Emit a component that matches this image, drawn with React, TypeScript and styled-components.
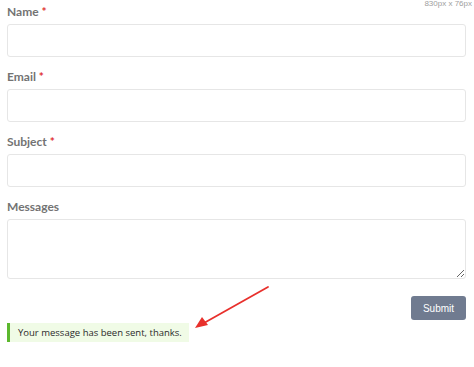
import React from 'react';
import styled, { createGlobalStyle } from 'styled-components';

const GlobalStyle = createGlobalStyle`
  html, body {
    margin: 0;
    padding: 0;
    background: #ffffff;
  }
  body {
    font-family: 'Open Sans', 'Liberation Sans', sans-serif;
  }
`;

const Page = styled.div`
  position: relative;
  width: 474px;
  height: 367px;
  overflow: hidden;
  box-sizing: border-box;
  padding: 3px 8px 0 7px;
`;

const SizeHint = styled.div`
  position: absolute;
  top: -1px;
  right: 2px;
  font-family: 'Liberation Sans', sans-serif;
  font-size: 8px;
  line-height: 9px;
  color: #a0a0a0;
`;

const Form = styled.form`
  display: flex;
  flex-direction: column;
`;

const Field = styled.div<{ $last?: boolean }>`
  display: flex;
  flex-direction: column;
  margin-bottom: ${(p) => (p.$last ? '0' : '11px')};
`;

const Label = styled.label`
  font-family: 'Lato', 'Open Sans', sans-serif;
  font-weight: 700;
  font-size: 12px;
  line-height: 18px;
  color: #737373;
  margin-bottom: 3px;
`;

const Required = styled.span`
  color: #e03030;
`;

const Input = styled.input`
  box-sizing: border-box;
  width: 100%;
  height: 33px;
  border: 1px solid #e6e6e6;
  border-radius: 3px;
  background: #fff;
  outline: none;
`;

const TextArea = styled.textarea`
  box-sizing: border-box;
  width: 100%;
  height: 60px;
  border: 1px solid #e6e6e6;
  border-radius: 3px;
  background: #fff;
  outline: none;
  resize: vertical;
  display: block;
`;

const Actions = styled.div`
  display: flex;
  justify-content: flex-end;
  margin-top: 17px;
`;

const SubmitButton = styled.button`
  width: 55px;
  height: 24px;
  border: none;
  border-radius: 3px;
  background: #707b90;
  color: #fff;
  font-family: 'Liberation Sans', sans-serif;
  font-size: 10px;
  cursor: pointer;
`;

const Notice = styled.div`
  align-self: flex-start;
  margin-top: 3px;
  height: 19px;
  box-sizing: border-box;
  display: flex;
  align-items: center;
  padding: 0 7px 0 8px;
  border-left: 3px solid #5cb82e;
  background: #f0fbe6;
  font-family: 'Open Sans', 'Liberation Sans', sans-serif;
  font-size: 9.5px;
  white-space: nowrap;
  color: #2a2a2a;
`;

const Arrow = styled.svg`
  position: absolute;
  left: 0;
  top: 0;
  pointer-events: none;
`;

const App = () => {
  return (
    <>
      <GlobalStyle />
      <Page>
        <SizeHint>830px x 76px</SizeHint>
        <Form onSubmit={(e) => e.preventDefault()}>
          <Field>
            <Label>
              Name <Required>*</Required>
            </Label>
            <Input type="text" />
          </Field>
          <Field>
            <Label>
              Email <Required>*</Required>
            </Label>
            <Input type="email" />
          </Field>
          <Field>
            <Label>
              Subject <Required>*</Required>
            </Label>
            <Input type="text" />
          </Field>
          <Field $last>
            <Label>Messages</Label>
            <TextArea />
          </Field>
          <Actions>
            <SubmitButton type="submit">Submit</SubmitButton>
          </Actions>
          <Notice>Your message has been sent, thanks.</Notice>
        </Form>
        <Arrow width="474" height="367" viewBox="0 0 474 367">
          <path d="M268 287 L204 323" stroke="#e8302c" strokeWidth="1.8" strokeLinecap="round" fill="none" />
          <polygon points="195,328 202,317 208,325" fill="#e8302c" />
        </Arrow>
      </Page>
    </>
  );
};

export default App;
